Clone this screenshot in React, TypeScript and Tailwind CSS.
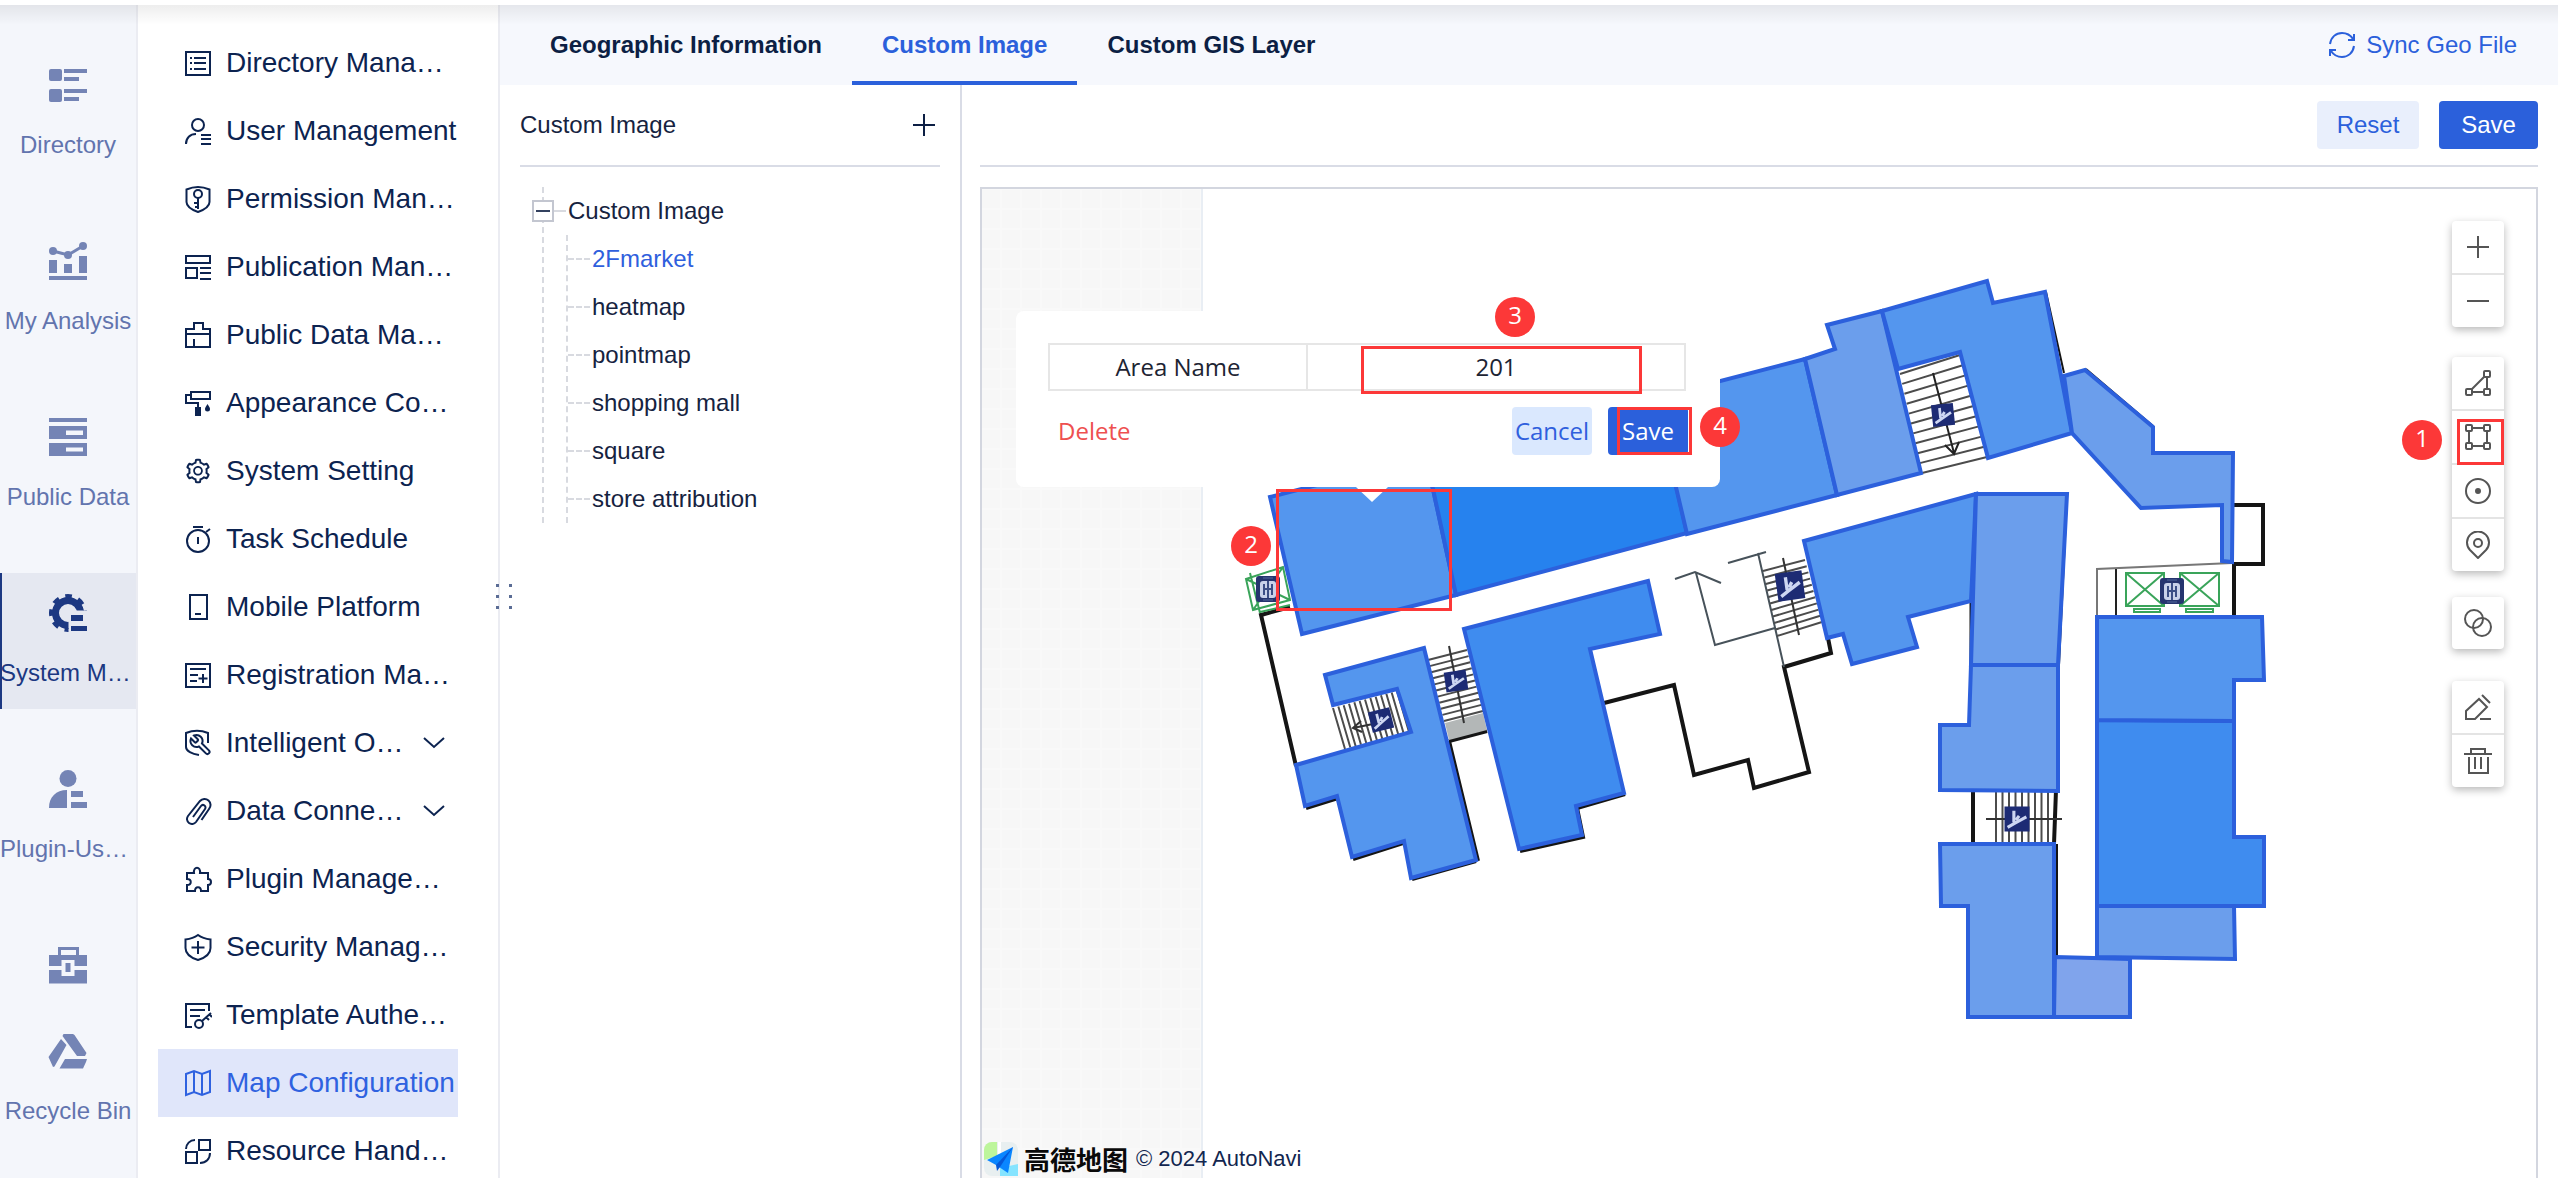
import React from "react";
import { AiOutlineSetting } from "react-icons/ai";

/* ---------- primary navigation rail ---------- */

const railIcons: Record<string, React.ReactNode> = {
  directory: (
    <g>
      <rect x="1" y="4" width="13" height="12" rx="2" />
      <rect x="1" y="24" width="13" height="13" rx="2" />
      <path d="M16 4h23v4H16zM16 12h15v4H16zM16 24h23v4H16zM16 32h15v4H16z" />
    </g>
  ),
  analysis: (
    <g>
      <path d="M1 19h8v13H1zM16 23h8v9h-8zM31 15h8v17h-8zM1 35h38v4H1z" />
      <path d="M5 10l15 4 15-9" fill="none" stroke="currentColor" strokeWidth="3" />
      <circle cx="5" cy="10" r="4" />
      <circle cx="20" cy="14" r="4" />
      <circle cx="35" cy="5" r="4" />
    </g>
  ),
  data: (
    <path
      fillRule="evenodd"
      d="M1 1h38v4H1zM1 9h38v13H1zM18 13.500h17v4.500H18zM1 26h38v13H1zM18 30.500h17v4H18z"
    />
  ),
  system: (
    <g>
      <clipPath id="gear-cut">
        <path d="M0 0h40v17.500H20.500V40H0z" />
      </clipPath>
      <g clipPath="url(#gear-cut)" fill="none" stroke="currentColor">
        <circle cx="20" cy="20" r="12.500" strokeWidth="7" />
        <circle
          cx="20"
          cy="20"
          r="17"
          strokeWidth="4"
          strokeDasharray="6.680 6.680"
          strokeDashoffset="3.340"
        />
      </g>
      <path d="M23 22h12v6H23zM23 33h16v5H23z" />
    </g>
  ),
  plugin: (
    <g>
      <circle cx="20" cy="9.500" r="8.500" />
      <path d="M1 39C1 28 8 21 19 21v18zM23 22h12v6H23zM23 33h16v6H23z" />
    </g>
  ),
  toolbox: (
    <path
      fillRule="evenodd"
      d="M10 10V2h21v8h8v11H26.500v-6h-13v6H1V10zM13 10h15V5H13zM1 25h12.500v6h13v-6H39v13.500H1zM17.500 18h5v9h-5z"
    />
  ),
  recycle: (
    <path d="M15.500 3H25l1.500 1L38.500 22 37 25h-8L14.500 5zM13 8l5.500 6L6.500 35.500 5 36 .5 26zM17 28h22l-1 3-3 6.500H11.500z" />
  ),
};

type RailItem = { icon: string; label?: string; active?: boolean; cut?: boolean };

const railItems: RailItem[] = [
  { icon: "directory", label: "Directory" },
  { icon: "analysis", label: "My Analysis" },
  { icon: "data", label: "Public Data" },
  { icon: "system", label: "System M…", active: true, cut: true },
  { icon: "plugin", label: "Plugin-Us…", cut: true },
  { icon: "toolbox" },
  { icon: "recycle", label: "Recycle Bin" },
];

function Rail() {
  return (
    <nav className="flex w-[138px] shrink-0 flex-col gap-10 overflow-hidden border-r-2 border-[#ebecf2] bg-[#f4f6fb] pt-10">
      {railItems.map((item) => (
        <button
          key={item.icon}
          aria-label={item.label ?? "Toolbox"}
          className={`relative flex shrink-0 flex-col items-center pt-5 ${item.label ? "h-[136px]" : "h-[46px]"} ${
            item.active ? "bg-[#e5e8f1] text-[#1c3882]" : "text-[#7484b5]"
          }`}
        >
          {item.active && <span className="absolute inset-y-0 left-0 w-[2px] bg-[#1c3882]" />}
          <svg viewBox="0 0 40 40" className="h-10 w-10 shrink-0" fill="currentColor">
            {railIcons[item.icon]}
          </svg>
          {item.label && (
            <span
              className={`mt-6 w-full text-[24px] leading-8 whitespace-nowrap ${item.cut ? "text-left" : "text-center"} ${
                item.active ? "" : "text-[#6274ae]"
              }`}
            >
              {item.label}
            </span>
          )}
        </button>
      ))}
    </nav>
  );
}

/* ---------- secondary menu ---------- */

const menu: { label: string; chevron?: boolean; active?: boolean; icon: React.ReactNode }[] = [
  {
    label: "Directory Mana…",
    icon: <path d="M2 3h24v23H2zM6 9h2M6 14h2M6 20h2M10 9h12M10 14h12M10 20h12" />,
  },
  {
    label: "User Management",
    icon: (
      <>
        <circle cx="14" cy="8" r="6" />
        <path d="M2 27c0-6 4-10 10-10M17 18h10M17 22h10M17 27h10" />
      </>
    ),
  },
  {
    label: "Permission Man…",
    icon: (
      <>
        <path d="M14 2c4 0 8 1 11.500 2.500V17c0 5-6 8-11.500 10C8.500 25 2.500 22 2.500 17V4.500C6 3 10 2 14 2z" />
        <circle cx="14" cy="9" r="4" />
        <path d="M14 13v11M10 18h4M11 22h3" />
      </>
    ),
  },
  { label: "Publication Man…", icon: <path d="M2 3h24v7H2zM2 15h11v10H2zM16 15h11M16 20h11M16 26h11" /> },
  { label: "Public Data Ma…", icon: <path d="M2 8h8V2h9v6h7v18H2zM2 13h24M10 18v8" /> },
  {
    label: "Appearance Co…",
    icon: (
      <>
        <path d="M7 3h19v7H7zM7 6H2v8h12v5" />
        <path d="M11 18h6v9h-6zM23.500 15c-2 3-2.500 4-2.500 5a2.500 2.500 0 0 0 5 0c0-1-.5-2-2.500-5z" fill="currentColor" stroke="none" />
      </>
    ),
  },
  { label: "System Setting", icon: null },
  {
    label: "Task Schedule",
    icon: (
      <>
        <circle cx="14" cy="16" r="11" />
        <path d="M9 2h10M14 12v7M22 7l4-3" />
      </>
    ),
  },
  { label: "Mobile Platform", icon: <path d="M6 2h17v24H6zM11 21h6" /> },
  {
    label: "Registration Ma…",
    icon: <path d="M2 3h24v23H2zM6 8h16M6 14h8M6 20h7M19 13v9M14.500 17.500h9" />,
  },
  {
    label: "Intelligent O…",
    chevron: true,
    icon: (
      <>
        <path d="M24 14V4C17 1 9 1 2 4v14c0 4 6 7 13 8" />
        <path
          transform="translate(28.500 4) scale(-1 1)"
          d="M14.700 6.300a1 1 0 0 0 0 1.400l1.600 1.600a1 1 0 0 0 1.400 0l3.770-3.770a6 6 0 0 1-7.940 7.940l-6.910 6.910a2.120 2.120 0 0 1-3-3l6.910-6.910a6 6 0 0 1 7.940-7.940l-3.760 3.760z"
        />
      </>
    ),
  },
  {
    label: "Data Conne…",
    chevron: true,
    icon: <path d="M17.500 23L25 12a5.500 5.500 0 0 0-9-8L4 19a4.500 4.500 0 0 0 8 6L21 12a2.500 2.500 0 0 0-4-3L9 20" />,
  },
  {
    label: "Plugin Manage…",
    icon: (
      <path d="M3 8h7c-1-7 7-7 6 0h8v6c4 0 4 6 0 6v6h-7c0-5-6-5-6 0H3v-6c5 0 5-6 0-6z" />
    ),
  },
  {
    label: "Security Manag…",
    icon: <path d="M14 2c4 3 8 4 12.500 4.500V15c0 6-6 10-12.500 12C7.500 25 1.500 21 1.500 15V6.500C6 6 10 5 14 2zM14 8v13M7.500 14.500h13" />,
  },
  {
    label: "Template Authe…",
    icon: (
      <>
        <path d="M8 26H2V3h23v7M6 9h15M6 15h10" />
        <circle cx="15" cy="23" r="4" />
        <path d="M18 20l9-8M22 16l3 3M25 13l3 3" />
      </>
    ),
  },
  {
    label: "Map Configuration",
    active: true,
    icon: <path d="M2 5l8-3 8 3 8-3v21l-8 3-8-3-8 3zM10 2v21M18 5v21" />,
  },
  {
    label: "Resource Hand…",
    icon: <path d="M15 3h11v10H15zM2 15h11v11H2zM2 12c0-5 4-9 9-9M26 16c0 6-4 10-10 10" />,
  },
];

function Menu() {
  return (
    <nav className="relative w-[362px] shrink-0 border-r-2 border-[#ebecf2] bg-white pt-6 pr-10 pl-5">
      {menu.map((m) => (
        <a
          key={m.label}
          href="#"
          className={`flex h-[68px] items-center pl-[26px] text-[28px] whitespace-nowrap ${
            m.active ? "bg-[#e0e6fa] text-[#2f62e0]" : "text-[#0c2350]"
          }`}
        >
          {m.icon ? (
            <svg viewBox="0 0 28 28" className="h-7 w-7 shrink-0" fill="none" stroke="currentColor" strokeWidth="2">
              {m.icon}
            </svg>
          ) : (
            <AiOutlineSetting className="h-7 w-7 shrink-0" />
          )}
          <span className="ml-[14px] flex-1">{m.label}</span>
          {m.chevron && (
            <svg viewBox="0 0 22 12" className="mr-[13px] h-3 w-[22px]" fill="none" stroke="currentColor" strokeWidth="2">
              <path d="M1 1l10 9L21 1" />
            </svg>
          )}
        </a>
      ))}
      {/* drag handle of the splitter */}
      <div className="absolute top-[579px] -right-[14px] grid grid-cols-2 gap-x-[10px] gap-y-2">
        {[0, 1, 2, 3, 4, 5].map((i) => (
          <i key={i} className="h-[3px] w-[3px] bg-[#5a6c95]" />
        ))}
      </div>
    </nav>
  );
}

/* ---------- header tabs ---------- */

function Header() {
  return (
    <header className="flex h-20 shrink-0 items-stretch bg-[#f6f8fd] pr-[41px] pl-5">
      {["Geographic Information", "Custom Image", "Custom GIS Layer"].map((t, i) => (
        <button
          key={t}
          className={`border-b-4 px-[30px] pt-1 text-[24px] font-bold whitespace-nowrap ${
            i === 1 ? "border-[#2b60db] text-[#2b60db]" : "border-transparent text-[#0c1f44]"
          }`}
        >
          {t}
        </button>
      ))}
      <button className="ml-auto flex items-center text-[24px] text-[#2b60db]">
        <svg viewBox="0 0 28 28" className="mr-[10px] h-7 w-7" fill="none" stroke="currentColor" strokeWidth="2">
          <path d="M2 13C3 6 8 2 14 2c5 0 9 3 11 6M26 3v6h-6M26 15c-1 7-6 11-12 11-5 0-9-3-11-6M2 25v-6h6" />
        </svg>
        Sync Geo File
      </button>
    </header>
  );
}

/* ---------- tree ---------- */

function TreePanel() {
  return (
    <section className="w-[462px] shrink-0 border-r-2 border-[#d9dce6] px-5 text-[24px] text-[#16233f]">
      <div className="flex h-[82px] items-center justify-between border-b-2 border-[#d9dce6]">
        <h2>Custom Image</h2>
        <button aria-label="Add" className="mr-1">
          <svg viewBox="0 0 24 24" className="h-6 w-6" fill="none" stroke="#0c1f44" strokeWidth="2">
            <path d="M12 1v22M1 12h22" />
          </svg>
        </button>
      </div>
      <ul className="mt-5 ml-[22px] border-l-2 border-dashed border-[#d8dae0]">
        <li>
          <div className="flex h-12 items-center">
            <button
              aria-label="Collapse"
              className="-ml-3 flex h-[22px] w-[22px] items-center justify-center border-2 border-[#c3c6d0] bg-white"
            >
              <i className="h-[2px] w-[14px] bg-[#33415f]" />
            </button>
            <i className="mr-[2px] w-3 border-t-2 border-dashed border-[#d8dae0]" />
            Custom Image
          </div>
          <ul className="ml-[22px] border-l-2 border-dashed border-[#d8dae0]">
            {["2Fmarket", "heatmap", "pointmap", "shopping mall", "square", "store attribution"].map((n, i) => (
              <li key={n} className="flex h-12 items-center">
                <i className="mr-[2px] w-[22px] border-t-2 border-dashed border-[#d8dae0]" />
                <a href="#" className={i === 0 ? "text-[#2f5fdd]" : ""}>
                  {n}
                </a>
              </li>
            ))}
          </ul>
        </li>
      </ul>
    </section>
  );
}

/* ---------- floor plan ---------- */

const shops: [string, string][] = [
  ["#5496ee", "1270,497 1426,457 1456,595 1302,634"],
  ["#2682ee", "1426,457 1661,420 1687,533 1456,595"],
  ["#5496ee", "1655,398 1805,359 1837,495 1687,534"],
  ["#6b9eec", "1805,359 1835,349 1827,325 1882,311 1921,473 1837,495"],
  ["#5496ee", "1882,311 1987,281 1993,303 2045,292 2072,433 1988,458 1960,352 1898,369"],
  ["#6b9eec", "2064,376 2085,370 2153,427 2153,453 2233,453 2232,562 2222,561 2222,505 2141,508 2072,433"],
  ["#5496ee", "1804,541 1976,494 1971,601 1908,617 1917,647 1852,664 1843,634 1827,638"],
  ["#6b9eec", "1976,494 2067,494 2058,665 1971,665"],
  ["#6b9eec", "1971,665 2058,665 2058,791 1940,790 1940,725 1969,725"],
  ["#6b9eec", "1940,844 2054,844 2054,1017 1968,1017 1968,906 1941,906"],
  ["#80a4ec", "2055,957 2130,959 2130,1017 2054,1017"],
  ["#6b9eec", "2097,906 2234,906 2235,959 2097,957"],
  ["#3f8cef", "2097,720 2234,721 2234,837 2264,837 2264,906 2097,906"],
  ["#5496ee", "2097,617 2262,617 2264,680 2234,680 2234,721 2097,720"],
  ["#5496ee", "1325,675 1424,648 1476,860 1411,878 1404,841 1352,857 1337,796 1305,806 1296,765 1411,732 1397,689 1333,705"],
  ["#3f8cef", "1464,629 1648,581 1660,634 1590,649 1624,793 1576,806 1582,835 1519,849"],
];

type Pt = [number, number];

/* n treads spread evenly between two edges a-b and c-d */
function Treads({ a, b, c, d, n }: { a: Pt; b: Pt; c: Pt; d: Pt; n: number }) {
  let path = "";
  for (let i = 0; i <= n; i++) {
    const t = i / n;
    path += `M${a[0] + (b[0] - a[0]) * t} ${a[1] + (b[1] - a[1]) * t}L${c[0] + (d[0] - c[0]) * t} ${c[1] + (d[1] - c[1]) * t}`;
  }
  return <path d={path} stroke="#4c4c4c" strokeWidth="2" fill="none" />;
}

function Escalator({ x, y, w, h, r = 0 }: { x: number; y: number; w: number; h: number; r?: number }) {
  return (
    <g transform={`translate(${x} ${y}) rotate(${r}) scale(${w / 24} ${h / 24})`}>
      <rect x="-12" y="-12" width="24" height="24" fill="#1d2b74" />
      <path d="M-9 8L-2 4 9-2M-3-8v11M2-3l-3 4" stroke="#cdd6f2" strokeWidth="3" fill="none" />
    </g>
  );
}

function Lift({ x, y }: { x: number; y: number }) {
  return (
    <g transform={`translate(${x} ${y})`}>
      <rect x="-12" y="-13" width="24" height="26" rx="3" fill="#26356f" />
      <rect x="-8" y="-8" width="16" height="17" rx="3" fill="#c9d2ea" />
      <path d="M-4-5v11M0-8v17M4-5v11M-5 0H5M-5-11H5M-5 11H5" stroke="#3c4f86" strokeWidth="2" />
    </g>
  );
}

function FloorPlan() {
  return (
    <svg viewBox="982 189 1554 989" className="absolute top-0 left-0 h-[989px] w-[1554px]" aria-hidden="true">
      <defs>
        <pattern id="tiles" x="1000" y="1008" width="20" height="20" patternUnits="userSpaceOnUse">
          <path d="M0 1H20M1 0V20" stroke="#f9f9f9" strokeWidth="2" />
        </pattern>
      </defs>
      <rect x="982" y="189" width="219" height="989" fill="#f7f7f7" />
      <rect x="982" y="189" width="219" height="989" fill="url(#tiles)" />
      <rect x="1201" y="189" width="2" height="989" fill="#e9eef4" />

      {/* outer walls */}
      <g fill="none" stroke="#151515" strokeWidth="4">
        <path d="M1290 607L1261 615 1296 766" />
        <path d="M1449 741L1487 731M1449 741L1478 861M1306 808L1338 798M1353 859L1403 843M1412 879L1476 861" />
        <path d="M1604 703L1674 685 1694 775 1748 760 1754 788 1809 772 1784 667 1831 653 1828 638" />
        <path d="M1520 851L1583 837 1577 808 1625 794" />
        <path d="M2234 505H2263V564H2234V617" />
        <path d="M1973 790V844M2056 790L2054 844" />
        <path d="M1971 603V665M1973 907V1014" strokeWidth="3" />
        <path d="M2059 665V790M2057 844V957M2046 292L2064 373M2153 426L2086 369M2067 496L2059 665" strokeWidth="2" />
      </g>
      <path d="M1445 723L1483 713 1487 730 1449 740z" fill="#b3b7b7" />

      {/* thin partitions */}
      <g fill="none" stroke="#47525a" strokeWidth="2">
        <path d="M1675 579l20-7 26 11M1696 573l19 72 60-17M1728 563l38-11M1758 553l26 114" />
        <path d="M2097 617v-48l135-6" stroke="#777" />
        <path d="M2116 569v48" stroke="#222" />
      </g>

      <Treads a={[1900, 374]} b={[1922, 473]} c={[1960, 355]} d={[1987, 457]} n={10} />
      <path d="M1933 373L1954 453M1945 445l9 9 5-12" stroke="#222" strokeWidth="2" fill="none" />
      <Treads a={[1763, 571]} b={[1777, 636]} c={[1805, 560]} d={[1822, 622]} n={10} />
      <path d="M1783 558L1799 635" stroke="#333" strokeWidth="2" />
      <Treads a={[1428, 660]} b={[1444, 721]} c={[1467, 650]} d={[1483, 711]} n={10} />
      <path d="M1449 646L1464 723" stroke="#333" strokeWidth="2" />
      <Treads a={[1333, 708]} b={[1397, 691]} c={[1345, 749]} d={[1409, 732]} n={12} />
      <path d="M1353 728l30-6M1361 721l-8 7 9 4" stroke="#333" strokeWidth="2" fill="none" />
      <Treads a={[1996, 792]} b={[2048, 792]} c={[1996, 843]} d={[2048, 843]} n={8} />
      <path d="M1986 819H2062" stroke="#333" strokeWidth="2" />

      {/* lift shafts */}
      <g fill="none" stroke="#3aa45a" strokeWidth="2">
        <path d="M2126 573h38v33h-38zM2126 573l38 33M2164 573l-38 33M2134 609h26v3h-26z" />
        <path d="M2180 573h39v33h-39zM2180 573l39 33M2219 573l-39 33M2186 609h27v3h-27z" />
        <path d="M1246 579l37-12 7 33-37 10zM1246 579l44 21M1250 573l10 40M1283 567l-30 43M1260 612l30-7" />
      </g>
      <Lift x={2172} y={591} />
      <Lift x={1268} y={589} />

      {shops.map(([fill, points]) => (
        <polygon key={points} points={points} fill={fill} stroke="#2c60dc" strokeWidth="4" />
      ))}

      <Escalator x={1943} y={415} w={22} h={22} r={-6} />
      <Escalator x={1790} y={586} w={27} h={28} r={-8} />
      <Escalator x={1456} y={681} w={22} h={20} r={-8} />
      <Escalator x={1381} y={720} w={22} h={21} r={-14} />
      <Escalator x={2017} y={819} w={25} h={25} />
    </svg>
  );
}

/* ---------- map tools ---------- */

const node = (x: number, y: number) => <rect key={`${x}-${y}`} x={x - 3} y={y - 3} width="6" height="6" rx="1" fill="#fff" />;

const toolGroups: { cls: string; tools: { name: string; icon: React.ReactNode }[] }[] = [
  {
    cls: "",
    tools: [
      { name: "Zoom in", icon: <path d="M14 3v22M3 14h22" /> },
      { name: "Zoom out", icon: <path d="M3 14h22" /> },
    ],
  },
  {
    cls: "mt-[30px]",
    tools: [
      { name: "Draw polygon", icon: <>{<path d="M23 5L5 23h18z" />}{[node(23, 5), node(5, 23), node(23, 23)]}</> },
      {
        name: "Draw rectangle",
        icon: <>{<path d="M5 5h18v18H5z" />}{[node(5, 5), node(23, 5), node(5, 23), node(23, 23)]}</>,
      },
      {
        name: "Draw circle",
        icon: (
          <>
            <circle cx="14" cy="14" r="12" />
            <circle cx="14" cy="14" r="2" fill="currentColor" />
          </>
        ),
      },
      {
        name: "Add marker",
        icon: (
          <>
            <path d="M14 27L6 19A11 11 0 1 1 22 19z" />
            <circle cx="14" cy="12" r="4" />
          </>
        ),
      },
    ],
  },
  {
    cls: "mt-[26px]",
    tools: [
      {
        name: "Merge",
        icon: (
          <>
            <circle cx="10" cy="10" r="9" />
            <circle cx="18" cy="18" r="9" />
          </>
        ),
      },
    ],
  },
  {
    cls: "mt-8",
    tools: [
      { name: "Edit", icon: <path d="M2 26v-8L15 6l8 8-12 12zM18 2l8 8M16 26h11" /> },
      { name: "Delete shape", icon: <path d="M0 7h28M7 7V2h14v5M5 10v16h19V10M11 10v12M17 10v12" /> },
    ],
  },
];

function MapTools() {
  return (
    <div className="absolute top-8 right-8 flex w-[52px] flex-col">
      {toolGroups.map((g, i) => (
        <div
          key={i}
          className={`${g.cls} divide-y-2 divide-[#e4e4e4] rounded bg-white shadow-[0_3px_8px_rgba(0,0,0,0.28)]`}
        >
          {g.tools.map((t) => (
            <button key={t.name} aria-label={t.name} className="box-content flex h-[52px] w-[52px] items-center justify-center text-[#555]">
              <svg viewBox="0 0 28 28" className="h-7 w-7" fill="none" stroke="currentColor" strokeWidth="2">
                {t.icon}
              </svg>
            </button>
          ))}
        </div>
      ))}
    </div>
  );
}

function Step({ n, cls }: { n: number; cls: string }) {
  return (
    <span
      className={`absolute flex h-10 w-10 items-center justify-center rounded-full bg-[#fc3838] pb-1 font-['Open_Sans',sans-serif] text-[24px] leading-8 text-white ${cls}`}
    >
      {n}
    </span>
  );
}

function AreaPopup() {
  return (
    <form
      onSubmit={(e) => e.preventDefault()}
      className="absolute top-[122px] left-[34px] w-[704px] rounded-lg bg-white px-8 pt-8 pb-8 font-['Open_Sans',sans-serif] text-[24px] text-[#1d2433]"
    >
      <div className="flex h-12 w-[638px] border-2 border-[#e6e6e6]">
        <label htmlFor="area" className="flex w-[258px] items-center justify-center border-r-2 border-[#e6e6e6]">
          Area Name
        </label>
        <input id="area" defaultValue="201" className="min-w-0 flex-1 bg-transparent text-center outline-none" />
      </div>
      <div className="mt-4 flex h-12 items-center">
        <button type="button" className="ml-[10px] text-[#ee5050]">
          Delete
        </button>
        <button type="button" className="ml-auto h-12 w-20 rounded bg-[#dae8fe] text-[#2f5fdd]">
          Cancel
        </button>
        <button type="submit" className="ml-4 h-12 w-20 rounded bg-[#2b60db] text-white">
          Save
        </button>
      </div>
      <svg viewBox="0 0 32 16" className="absolute top-full left-[340px] h-4 w-8" fill="#fff">
        <path d="M0 0h32L16 15z" />
      </svg>
    </form>
  );
}

function Attribution() {
  return (
    <div className="absolute top-[953px] left-[2px] flex items-center text-[22px] leading-8 whitespace-nowrap text-[#12264f]">
      <svg viewBox="0 0 34 34" className="h-[34px] w-[34px]">
        <rect width="34" height="34" rx="8" fill="#e8eff0" />
        <path d="M0 18V8a8 8 0 0 1 8-8h5v14z" fill="#bdf59b" />
        <path d="M16 26l18-4v12H16z" fill="#85e4ff" />
        <path d="M14 0h3v12h-3z" fill="#fff" />
        <path d="M29 5L3 18l9 5 12 8z" fill="#0a86ff" />
        <path d="M29 5L12 23l1 6 3-4z" fill="#0558d8" />
      </svg>
      <span className="ml-[6px] font-['Noto_Sans_CJK_SC',sans-serif] text-[26px] font-bold text-[#0a0a0a]">高德地图</span>
      <span className="ml-2">© 2024 AutoNavi</span>
    </div>
  );
}

function MapPane() {
  return (
    <section className="flex min-w-0 flex-1 flex-col pr-5 pl-[18px]">
      <div className="flex h-[82px] shrink-0 items-center justify-end gap-5 border-b-2 border-[#d9dce6] text-[24px]">
        <button className="h-12 w-[102px] rounded bg-[#e9effc] text-[#2b60db]">Reset</button>
        <button className="h-12 w-[99px] rounded bg-[#2b60db] text-white">Save</button>
      </div>
      <div className="relative mt-5 flex-1 overflow-hidden border-2 border-b-0 border-[#d3d6df] bg-white">
        <FloorPlan />
        <AreaPopup />
        <MapTools />
        <Attribution />

        {/* walkthrough annotations */}
        <i className="pointer-events-none absolute top-[300px] left-[294px] h-[122px] w-[176px] border-3 border-[#fc3838]" />
        <i className="pointer-events-none absolute top-[157px] left-[379px] h-12 w-[281px] border-3 border-[#fc3838]" />
        <i className="pointer-events-none absolute top-[218px] left-[635px] h-12 w-[75px] border-3 border-[#fc3838]" />
        <i className="pointer-events-none absolute top-[230px] right-8 h-[46px] w-[47px] border-3 border-[#fc3838]" />
        <Step n={1} cls="top-[231px] right-[94px]" />
        <Step n={2} cls="top-[337px] left-[249px]" />
        <Step n={3} cls="top-[108px] left-[513px]" />
        <Step n={4} cls="top-[218px] left-[718px]" />
      </div>
    </section>
  );
}

export default function App() {
  return (
    <div className="flex h-screen flex-col overflow-hidden bg-white font-['Liberation_Sans',Arial,sans-serif]">
      <div className="h-[5px] shrink-0 bg-white" />
      <div className="relative flex min-h-0 flex-1">
        <Rail />
        <Menu />
        <main className="flex min-w-0 flex-1 flex-col">
          <Header />
          <div className="flex min-h-0 flex-1">
            <TreePanel />
            <MapPane />
          </div>
        </main>
        <div className="pointer-events-none absolute inset-x-0 top-0 h-5 bg-linear-to-b from-black/7 to-transparent" />
      </div>
    </div>
  );
}
